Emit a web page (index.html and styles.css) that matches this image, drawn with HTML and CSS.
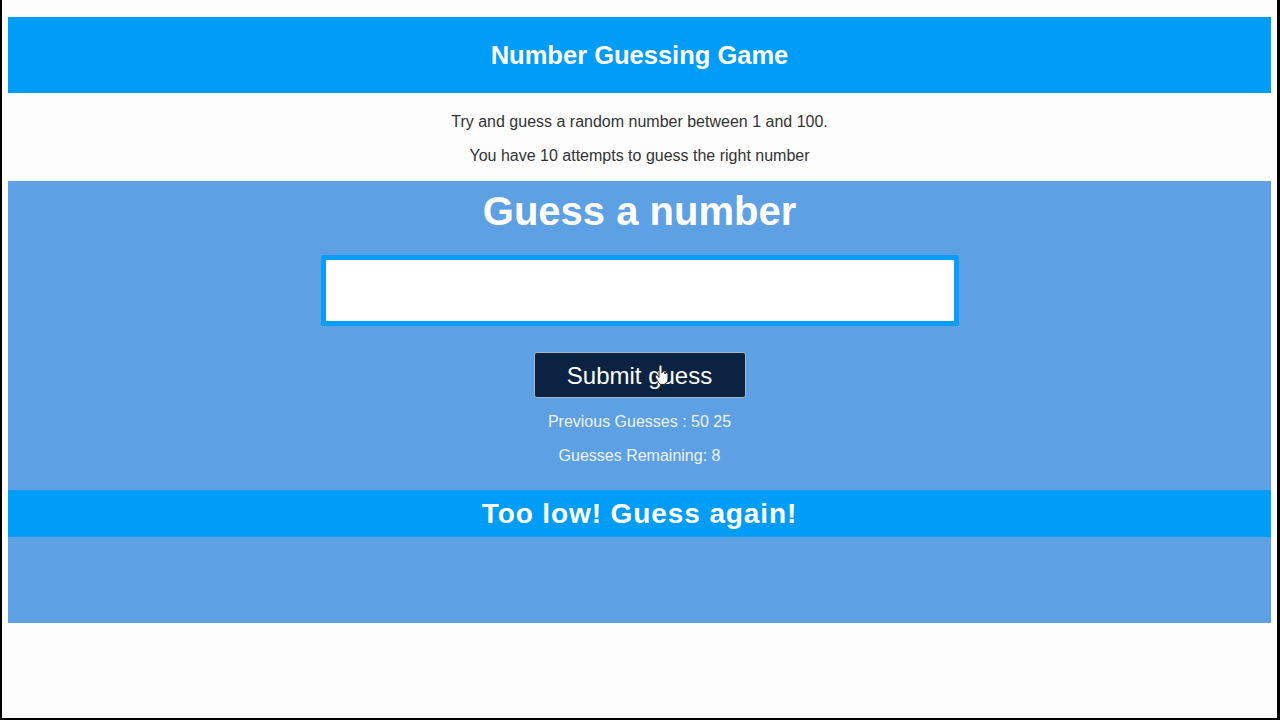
FILE: index.html
```html
<!DOCTYPE html>
<html lang="en">
<head>
    <meta charset="UTF-8">
    <meta name="viewport" content="width=device-width, initial-scale=1.0">
    <title>Number Guessing Game</title>

    <link rel="stylesheet" href="styles.css">
</head>
<body>

    <div class="frame">
        <header class="titre">
            <h1>Number Guessing Game</h1>
        </header>

        <div class="intro">
            <p>Try and guess a random number between 1 and 100.</p>
            <p>You have 10 attempts to guess the right number</p>
        </div>

        <div class="jeu">
            <form id="formulaireJeu" class="formulaire">
                <h2>Guess a number</h2>
                <input type="text" id="guessField" class="champ">
                <div class="bouton-zone">
                    <input type="submit" id="subt" class="bouton" value="Submit guess">
                    <!-- pointeur de la souris -->
                    <svg class="curseur" width="16" height="22" viewBox="0 0 16 22">
                        <path d="M5 2.5a1.5 1.5 0 0 1 3 0V9a1.5 1.5 0 0 1 3 0v1a1.5 1.5 0 0 1 3 0v5c0 3-2 5.5-5 5.5H8c-2 0-3-1-4-3L1.3 13a1.4 1.4 0 0 1 2.4-1.4L5 13.5Z" fill="#fff" stroke="#222" stroke-width="1"/>
                    </svg>
                </div>
                <p class="info">Previous Guesses : <span class="guesses">50 25</span></p>
                <p class="info">Guesses Remaining: <span class="lastResult">8</span></p>
            </form>

            <div class="message">
                <h3 class="lowOrHi">Too low! Guess again!</h3>
            </div>
        </div>
    </div>

</body>
</html>
```

FILE: styles.css
```css
body {
    font-family: 'Liberation Sans', Arial, sans-serif;
    background-color: #fdfdfd;
    margin: 0;
}

.frame {
    height: 720px;
    box-sizing: border-box;
    padding: 17px 6px 0 6px;
    border-left: 2px solid #000;
    border-right: 3px solid #000;
    border-bottom: 2px solid #000;
}

.titre {
    background-color: #009df8;
    height: 76px;
    display: flex;
    justify-content: center;
    align-items: center;
}

.titre h1 {
    margin: 0;
    font-size: 25.5px;
    color: #fff;
}

.intro {
    padding: 20px 0 16px;
    text-align: center;
}

.intro p {
    margin: 0 0 16px;
    font-size: 16px;
    line-height: 18px;
    color: #333;
}

.intro p:last-child {
    margin-bottom: 0;
}

.jeu {
    background-color: #5da0e3;
    padding-bottom: 86px;
}

.formulaire {
    display: flex;
    flex-direction: column;
    align-items: center;
    padding: 7px 0 25px;
}

.formulaire h2 {
    margin: 0;
    font-size: 40px;
    line-height: 46px;
    color: #fff;
}

.champ {
    width: 638px;
    height: 71px;
    margin-top: 21px;
    box-sizing: border-box;
    border: 5px solid #0a9df8;
    border-radius: 2px;
    background-color: #fff;
}

.bouton-zone {
    position: relative;
    margin-top: 26px;
}

.bouton {
    width: 212px;
    height: 46px;
    padding-top: 3px;
    background-color: #0b2242;
    color: #fff;
    font-family: 'Liberation Sans', Arial, sans-serif;
    font-size: 24px;
    border: 1px solid #aab4c0;
    border-radius: 3px;
    cursor: pointer;
    display: block;
}

.curseur {
    position: absolute;
    left: 120px;
    top: 12px;
}

.info {
    margin: 15px 0 0;
    font-size: 16px;
    line-height: 18px;
    color: #eef5fd;
}

.info + .info {
    margin-top: 16px;
}

.message {
    background-color: #009df8;
    height: 47px;
    display: flex;
    justify-content: center;
    align-items: center;
}

.message h3 {
    margin: 0;
    font-size: 28px;
    letter-spacing: 0.9px;
    color: #fff;
}
```
